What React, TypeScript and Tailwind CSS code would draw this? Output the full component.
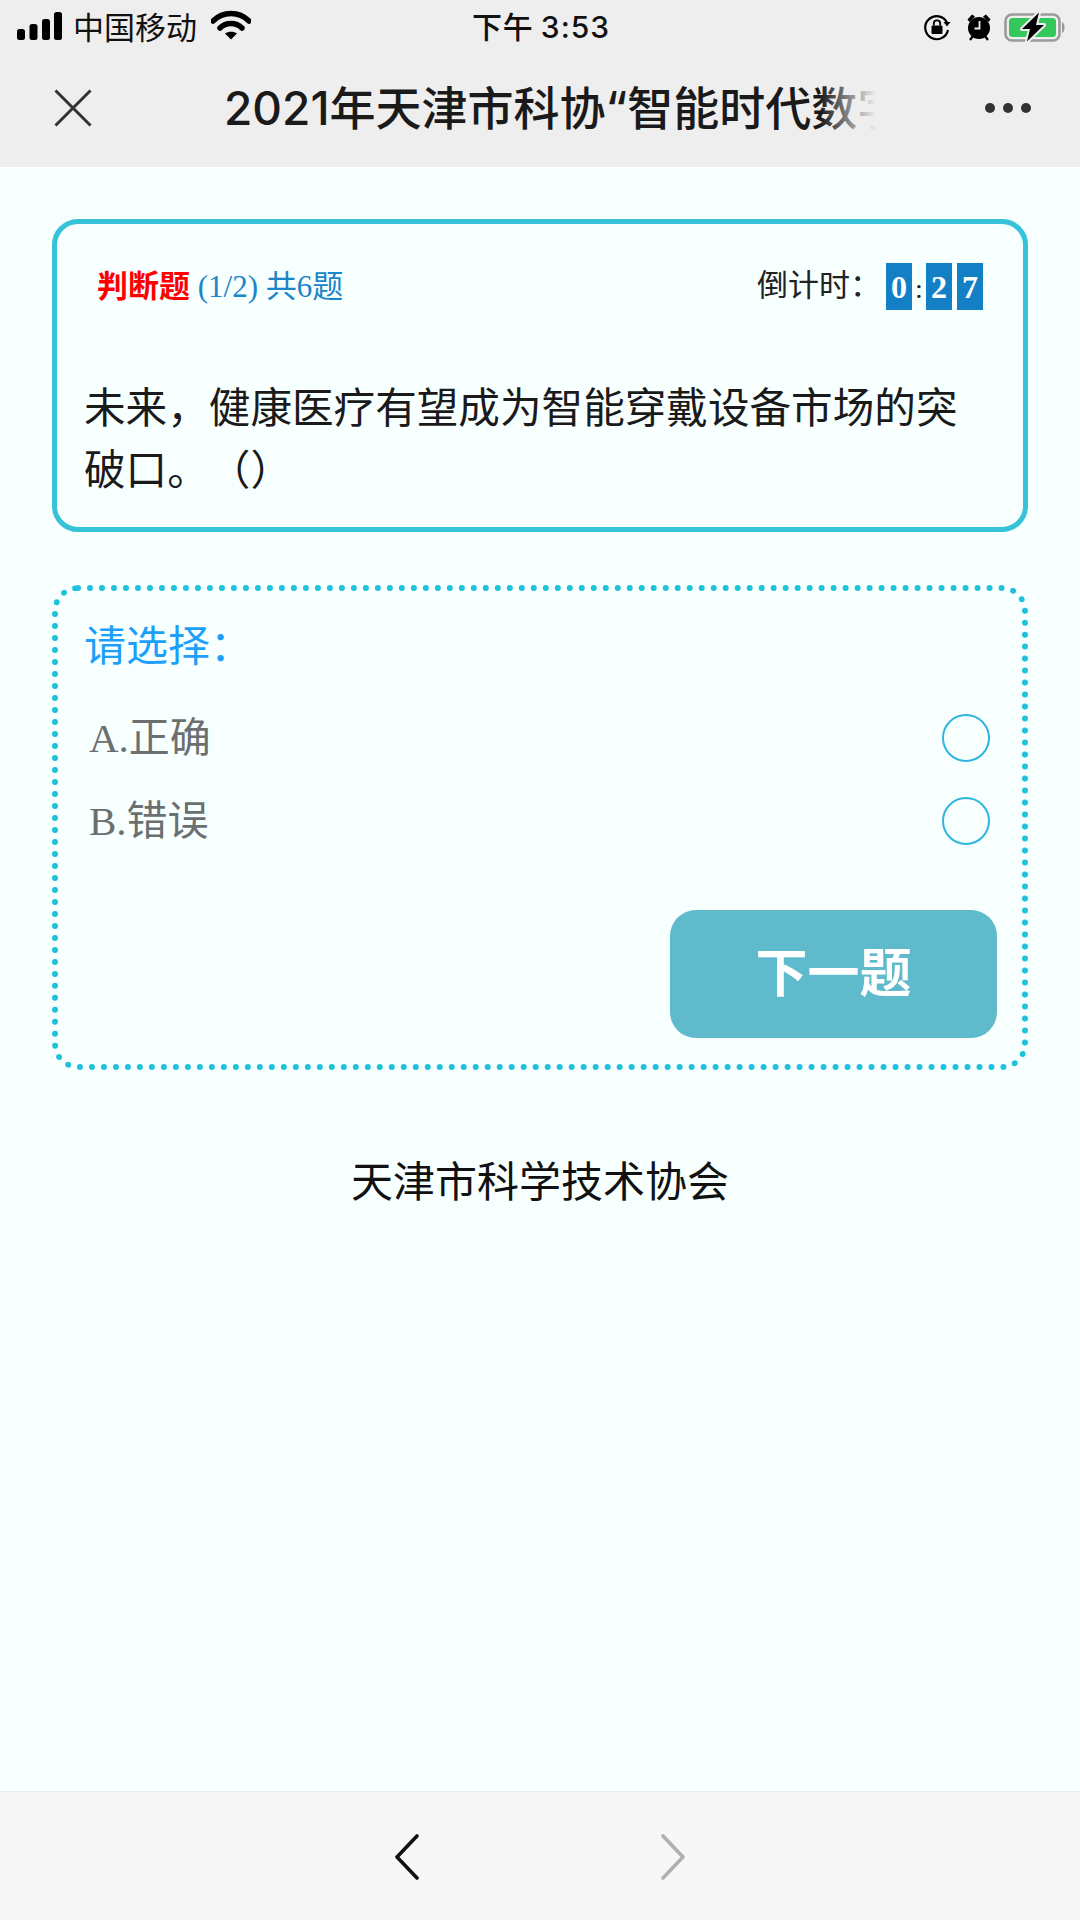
import React from "react";

const SANS = "font-['Inter','Noto_Sans_CJK_SC',sans-serif]";
const SERIF = "font-['Liberation_Serif','Noto_Sans_CJK_SC',serif]";

const StatusBar: React.FC = () => (
  <div className="flex h-[52px] items-center pl-[17px] pr-[15px] pt-[2px] text-[#111]">
    <div className="flex flex-1 items-center">
      <svg width="45" height="28" viewBox="0 0 45 28" className="mt-[-2px]">
        <rect x="0" y="17" width="8" height="11" rx="2.5" fill="#000" />
        <rect x="12.5" y="12" width="8" height="16" rx="2.5" fill="#000" />
        <rect x="25" y="7" width="8" height="21" rx="2.5" fill="#000" />
        <rect x="37" y="0" width="8" height="28" rx="2.5" fill="#000" />
      </svg>
      <span className={`ml-[11px] text-[31px] leading-none ${SANS}`}>中国移动</span>
      <svg width="40" height="30" viewBox="0 0 40 30" className="ml-[14px] mt-[-5px]">
        <path d="M2 11 C12 1 28 1 38 11" fill="none" stroke="#000" strokeWidth="5.5" strokeLinecap="round" />
        <path d="M9 18 C15 12 25 12 31 18" fill="none" stroke="#000" strokeWidth="5.5" strokeLinecap="round" />
        <path d="M14 23.5 C17 21 23 21 26 23.5 L20 29.5 Z" fill="#000" />
      </svg>
    </div>
    <span className={`text-[30px] font-medium leading-none tracking-[1px] [word-spacing:-2px] ${SANS}`}>下午 3:53</span>
    <div className="flex flex-1 items-center justify-end">
      <svg width="28" height="28" viewBox="0 0 28 28">
        <path d="M24 9.5 A11.5 11.5 0 1 0 25 17" fill="none" stroke="#000" strokeWidth="2.2" />
        <path d="M20.5 9 L27.5 9 L24 13.5 Z" fill="#000" />
        <rect x="8.5" y="12.5" width="11" height="8.5" rx="1.2" fill="#000" />
        <path d="M10.8 12.5 V10.5 A3.2 3.2 0 0 1 17.2 10.5 V12.5" fill="none" stroke="#000" strokeWidth="1.8" />
      </svg>
      <svg width="26" height="28" viewBox="0 0 26 28" className="ml-[15px]">
        <circle cx="13" cy="15" r="11" fill="#000" />
        <path d="M1.5 6.5 L6 1.5 L9 3.5 L3.5 9 Z M24.5 6.5 L20 1.5 L17 3.5 L22.5 9 Z" fill="#000" />
        <path d="M4 27 L7 23 M22 27 L19 23" stroke="#000" strokeWidth="2.2" />
        <path d="M13.5 8 V15.5 H8.5" fill="none" stroke="#eee" strokeWidth="1.8" />
      </svg>
      <svg width="61" height="30" viewBox="0 0 61 30" className="ml-[12px]">
        <rect x="1.5" y="2.5" width="54" height="26" rx="6.5" fill="none" stroke="#9a9a9a" strokeWidth="2.6" />
        <rect x="5" y="6" width="47" height="19" rx="3.5" fill="#34c759" />
        <path d="M58 10 C60 11 60.5 13 60.5 15.5 C60.5 18 60 20 58 21 Z" fill="#9a9a9a" />
        <path d="M35 0.5 L18 17 H26 L23 29.5 L40 13 H32 Z" fill="#eee" stroke="#eee" strokeWidth="4" strokeLinejoin="round" />
        <path d="M35 0.5 L18 17 H26 L23 29.5 L40 13 H32 Z" fill="#000" />
      </svg>
    </div>
  </div>
);

const TitleBar: React.FC = () => (
  <div className="flex h-[115px] items-center pb-[3px]">
    <div className="flex w-[224px] shrink-0 pl-[54px]">
      <svg width="38" height="38" viewBox="0 0 38 38">
        <path d="M1.5 1.5 L36.5 36.5 M36.5 1.5 L1.5 36.5" stroke="#333" strokeWidth="3" />
      </svg>
    </div>
    <div className="relative w-[652px] overflow-hidden">
      <div className={`whitespace-nowrap text-[46px] font-medium leading-[60px] text-[#1a1a1a] ${SANS}`}>
        {"2021年天津市科协\u201C智能时代数字"}
      </div>
      <div className="absolute inset-y-0 right-0 w-[56px] bg-linear-to-r from-transparent to-[#eeeeee]" />
    </div>
    <div className="ml-auto flex gap-[8px] pr-[49px]">
      <span className="h-[10px] w-[10px] rounded-full bg-[#333]" />
      <span className="h-[10px] w-[10px] rounded-full bg-[#333]" />
      <span className="h-[10px] w-[10px] rounded-full bg-[#333]" />
    </div>
  </div>
);

const Digit: React.FC<{ value: string }> = ({ value }) => (
  <span className="flex h-[47px] w-[26px] items-center justify-center bg-[#1380c6] text-[32px] font-bold text-white">
    {value}
  </span>
);

const QuestionCard: React.FC = () => (
  <section className="h-[313px] rounded-[26px] border-[5px] border-[#36c2d9] pl-[27px] pr-[40px]">
    <div className={`flex items-center justify-between pl-[13px] pt-[39px] ${SERIF}`}>
      <div className="text-[31px] leading-[47px] text-[#1b85c9]">
        <span className="font-bold text-[#ff0000]">判断题</span> (1/2) 共6题
      </div>
      <div className="flex items-center">
        <span className="mr-[5px] text-[31px] text-[#222]">{"倒计时\uFF1A"}</span>
        <Digit value="0" />
        <span className="flex w-[14px] justify-center pt-[4px] text-[28px] text-[#222]">:</span>
        <Digit value="2" />
        <span className="w-[5px]" />
        <Digit value="7" />
      </div>
    </div>
    <p className={`mt-[67px] text-[41.6px] leading-[62px] text-[#1a1a1a] [text-spacing-trim:space-all] ${SANS}`}>
      {"未来\uFF0C健康医疗有望成为智能穿戴设备市场的突破口\u3002\uFF08\uFF09"}
    </p>
  </section>
);

const Option: React.FC<{ label: string }> = ({ label }) => (
  <div className="flex h-[83px] items-center justify-between pl-[5px] pr-[7px]">
    <span className={`pt-[2px] text-[41px] text-[#6b6f6f] ${SERIF}`}>{label}</span>
    <span className="h-[48px] w-[48px] rounded-full border-2 border-[#2fb5e0]" />
  </div>
);

const AnswerCard: React.FC = () => (
  <section className="mt-[53px] h-[485px] rounded-[26px] border-[6px] border-dotted border-[#1fc2dc] pl-[26px] pr-[25px] pt-[25px]">
    <div className={`text-[42px] leading-[60px] text-[#1e9ffa] ${SANS}`}>{"请选择\uFF1A"}</div>
    <div className="mt-[20px]">
      <Option label="A.正确" />
      <Option label="B.错误" />
    </div>
    <div className="mt-[48px] flex justify-end">
      <button className={`h-[128px] w-[327px] rounded-[26px] bg-[#5fbbcb] text-[52px] font-bold text-white ${SANS}`}>
        下一题
      </button>
    </div>
  </section>
);

const BottomBar: React.FC = () => (
  <div className="flex h-[129px] items-center justify-center gap-[240px] border-t border-[#e6eeee] bg-[#f7f7f7] pt-[1px]">
    <svg width="26" height="46" viewBox="0 0 26 46">
      <path d="M23 2 L3 23 L23 44" fill="none" stroke="#111" strokeWidth="3.6" strokeLinecap="round" strokeLinejoin="round" />
    </svg>
    <svg width="26" height="46" viewBox="0 0 26 46">
      <path d="M3 2 L23 23 L3 44" fill="none" stroke="#b0b0b0" strokeWidth="3.6" strokeLinecap="round" strokeLinejoin="round" />
    </svg>
  </div>
);

const App: React.FC = () => (
  <div className="flex h-[1920px] w-[1080px] flex-col bg-[#f7ffff]">
    <header className="bg-[#eeeeee]">
      <StatusBar />
      <TitleBar />
    </header>
    <main className="flex-1 px-[52px] pt-[52px]">
      <QuestionCard />
      <AnswerCard />
      <div className={`mt-[82px] text-center text-[42px] leading-[60px] text-[#111] ${SANS}`}>天津市科学技术协会</div>
    </main>
    <BottomBar />
  </div>
);

export default App;
